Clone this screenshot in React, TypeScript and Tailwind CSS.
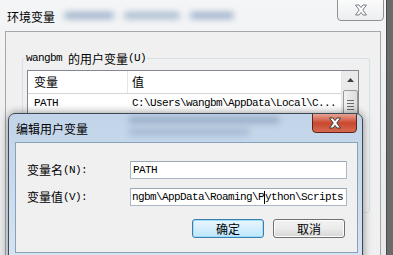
import React from "react";

function A({ children }: { children: React.ReactNode }) {
  return (
    <span className="font-['Liberation_Mono',monospace] text-[11px] tracking-[-0.6px] text-black whitespace-pre">
      {children}
    </span>
  );
}

function C({ children }: { children: React.ReactNode }) {
  return (
    <span className="font-['Noto_Sans_CJK_SC',sans-serif] text-[12px] text-black">
      {children}
    </span>
  );
}

function XGlyph({ fill, stroke }: { fill: string; stroke: string }) {
  return (
    <svg width="14" height="12" viewBox="0 0 14 12">
      <path
        d="M1.5 1 H5 L7 3.6 L9 1 H12.5 L8.8 6 L12.5 11 H9 L7 8.4 L5 11 H1.5 L5.2 6 Z"
        fill={fill}
        stroke={stroke}
        strokeWidth="1"
        strokeLinejoin="round"
      />
    </svg>
  );
}

export default function App() {
  return (
    <div className="relative w-[393px] h-[255px] overflow-hidden bg-[#6b6b6b] leading-none">
      {/* Main window */}
      <div className="absolute left-0 top-0 w-[387px] h-[270px] bg-gradient-to-b from-[#f4f5f6] to-[#e6e8ea] border-r border-[#4a4a4a]">
        <div className="relative h-[31px] flex items-center pl-[7px] pt-[3px]">
          <C>环境变量</C>
          <div className="absolute left-[64px] top-[12px] w-[50px] h-[7px] rounded-full bg-[#9fb2cc] blur-[3px]" />
          <div className="absolute left-[124px] top-[12px] w-[56px] h-[7px] rounded-full bg-[#a9bbd2] blur-[3px]" />
          <div className="absolute left-[190px] top-[12px] w-[44px] h-[7px] rounded-full bg-[#9fb2cc] blur-[3px]" />
          <div className="absolute right-[2px] top-[-1px] w-[47px] h-[22px] rounded-b-[4px] border border-[#8e9296] bg-gradient-to-b from-[#fbfbfb] to-[#eceef0] flex items-center justify-center">
            <XGlyph fill="#ffffff" stroke="#7a7e84" />
          </div>
        </div>
        <div className="mx-[5px] h-[239px] border border-[#a3a8ae] bg-[#f0f0f0] pt-[26px] pl-[16px] pr-[10px]">
          <div className="relative h-[155px] border border-[#d5dfe5] rounded-[3px]">
            <div className="absolute left-[2px] top-[-7px] bg-[#f0f0f0] px-[1px] flex items-center h-[13px]">
              <A>wangbm </A>
              <C>的用户变量</C>
              <A>(U)</A>
            </div>
            <div className="mt-[11px] ml-[4px] mr-[10px] h-[132px] border border-[#828790] bg-white flex">
              <div className="flex-1 flex flex-col">
                <div className="h-[23px] flex border-b border-[#d5d5d5]">
                  <div className="w-[100px] pl-[6px] flex items-center border-r border-[#e5e5e5]">
                    <C>变量</C>
                  </div>
                  <div className="pl-[4px] flex items-center">
                    <C>值</C>
                  </div>
                </div>
                <div className="h-[19px] flex">
                  <div className="w-[100px] pl-[6px] flex items-center">
                    <A>PATH</A>
                  </div>
                  <div className="pl-[4px] flex items-center">
                    <A>C:\Users\wangbm\AppData\Local\C...</A>
                  </div>
                </div>
              </div>
              <div className="w-[17px] bg-[#eaeaea] border-l border-[#e6e6e6] flex flex-col items-center">
                <div className="h-[18px] w-full flex items-center justify-center">
                  <svg width="7" height="4" viewBox="0 0 7 4">
                    <path d="M0 4 L3.5 0 L7 4 Z" fill="#404040" />
                  </svg>
                </div>
                <div className="mt-[1px] w-[15px] h-[60px] rounded-[2px] border border-[#9a9a9a] bg-gradient-to-r from-[#f2f2f2] to-[#dcdcdc] flex flex-col items-center pt-[9px] gap-[2px]">
                  <div className="w-[7px] h-[1px] bg-[#6a6a6a]" />
                  <div className="w-[7px] h-[1px] bg-[#6a6a6a]" />
                  <div className="w-[7px] h-[1px] bg-[#6a6a6a]" />
                  <div className="w-[7px] h-[1px] bg-[#6a6a6a]" />
                </div>
              </div>
            </div>
          </div>
        </div>
      </div>

      {/* Dialog */}
      <div className="absolute left-[8px] top-[113px] w-[355px] h-[150px] rounded-t-[7px] border border-[#3d4956] bg-gradient-to-b from-[#c2d4e8] via-[#c9dbee] to-[#d6e4f2] shadow-[0_0_8px_rgba(0,0,0,0.45)]">
        <div className="relative h-[28px] flex items-center pl-[7px] overflow-hidden rounded-t-[6px]">
          <div className="absolute left-[120px] top-[3px] w-[150px] h-[6px] bg-[#7f97b3] blur-[3px] opacity-70" />
          <div className="absolute left-[120px] top-[15px] w-[120px] h-[6px] bg-[#8aa2bd] blur-[3px] opacity-60" />
          <span className="relative">
            <C>编辑用户变量</C>
          </span>
          <div className="absolute right-[5px] top-[-1px] w-[45px] h-[20px] rounded-b-[4px] border border-[#5e2418] bg-gradient-to-b from-[#e6a394] via-[#c9472f] to-[#d56a4f] flex items-center justify-center">
            <XGlyph fill="#ffffff" stroke="#3b3b3b" />
          </div>
        </div>
        <div className="ml-[6px] mr-[4px] h-[111px] border border-[#8aa0b6] bg-[#f0f0f0] pl-[11px] pr-[12px] pt-[18px]">
          <div className="grid grid-cols-[103px_217px] gap-y-[9px]">
            <div className="h-[18px] flex items-center">
              <C>变量名</C>
              <A>(N):</A>
            </div>
            <div className="h-[18px] border border-[#a9b7c7] border-t-[#9aa8b8] bg-white flex items-center pl-[2px]">
              <A>PATH</A>
            </div>
            <div className="h-[18px] flex items-center">
              <C>变量值</C>
              <A>(V):</A>
            </div>
            <div className="h-[18px] border border-[#a9b7c7] border-t-[#9aa8b8] bg-white flex items-center overflow-hidden pl-[1px] whitespace-nowrap">
              <A>ngbm\AppData\Roaming\P</A>
              <span className="inline-block w-[1px] h-[13px] bg-black" />
              <A>ython\Scripts</A>
            </div>
          </div>
          <div className="mt-[13px] flex justify-end gap-[9px]">
            <div className="w-[72px] h-[19px] rounded-[3px] border border-[#3c7fb1] bg-gradient-to-b from-[#eaf6fd] to-[#bee6fd] shadow-[inset_0_0_0_1px_#9fdcf9] flex items-center justify-center">
              <C>确定</C>
            </div>
            <div className="w-[72px] h-[19px] rounded-[3px] border border-[#707070] bg-gradient-to-b from-[#f2f2f2] via-[#ebebeb] to-[#d6d6d6] shadow-[inset_0_0_0_1px_#fcfcfc] flex items-center justify-center">
              <C>取消</C>
            </div>
          </div>
        </div>
      </div>
    </div>
  );
}
